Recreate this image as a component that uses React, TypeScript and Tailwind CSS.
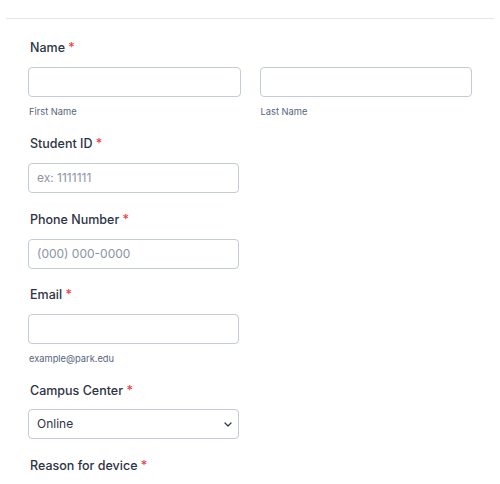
import React from "react";

function Label({ text, className = "" }: { text: string; className?: string }) {
  return (
    <div className={"pl-[2px] text-[12.5px] leading-[20px] font-[450] text-[#2c3345] " + className}>
      {text} <span className="text-[#f23a3c]">*</span>
    </div>
  );
}

function Input({ placeholder = "", className = "" }: { placeholder?: string; className?: string }) {
  return (
    <div
      className={
        "h-[30px] rounded-[4px] border border-[#c3cad8] bg-white flex items-center pl-[8px] text-[12px] text-[#8c93a6] " +
        className
      }
    >
      {placeholder}
    </div>
  );
}

function Sub({ text }: { text: string }) {
  return <div className="mt-[8px] pl-[1px] text-[9.3px] leading-[14px] text-[#57647e]">{text}</div>;
}

export default function App() {
  return (
    <div className="w-[500px] h-[484px] bg-white overflow-hidden" style={{ fontFamily: "Inter, 'Noto Sans', sans-serif" }}>
      <div className="h-[18px]" />
      <div className="mx-[6px] h-px bg-[#e3e5ea]" />
      <div className="px-[28px]">
        <Label text="Name" className="mt-[19px]" />
        <div className="mt-[9px] grid grid-cols-2 gap-[19px]">
          <div>
            <Input />
            <Sub text="First Name" />
          </div>
          <div>
            <Input />
            <Sub text="Last Name" />
          </div>
        </div>

        <Label text="Student ID" className="mt-[15px]" />
        <Input placeholder="ex: 1111111" className="mt-[9px] w-[211px]" />

        <Label text="Phone Number" className="mt-[17px]" />
        <Input placeholder="(000) 000-0000" className="mt-[9px] w-[211px]" />

        <Label text="Email" className="mt-[16px]" />
        <div className="w-[211px]">
          <Input className="mt-[9px]" />
          <Sub text="example@park.edu" />
        </div>

        <Label text="Campus Center" className="mt-[15px]" />
        <div className="mt-[8px] w-[211px] h-[30px] rounded-[4px] border border-[#c3cad8] bg-white flex items-center justify-between pl-[8px] pr-[6px] text-[12px] text-[#2c3345]">
          <span>Online</span>
          <svg width="8" height="5" viewBox="0 0 8 5" fill="none">
            <path d="M1 1l3 3 3-3" stroke="#2c3345" strokeWidth="1.2" strokeLinecap="round" strokeLinejoin="round" />
          </svg>
        </div>

        <Label text="Reason for device" className="mt-[17px]" />
        <div className="mt-[8px] mr-[-4px] h-px bg-[#e3e5ea]" />
      </div>
    </div>
  );
}
